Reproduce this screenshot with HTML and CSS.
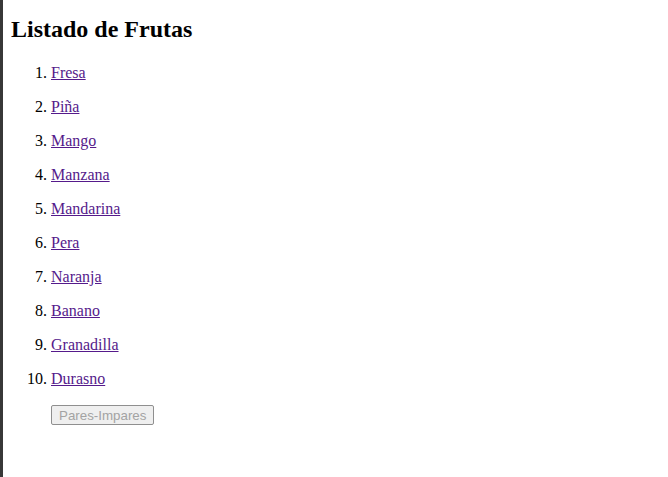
FILE: index.html
```html
<!DOCTYPE html>
<html lang="es">
<head>
    <meta charset="UTF-8">
    <title>Frutas</title>
    <link rel="stylesheet" href="styles.css">
</head>
<body>
<h2 class="titulo">Listado de Frutas</h2>
<ol class="lista">
    <li><p><a href="#">Fresa</a></p></li>
    <li><p><a href="#">Piña</a></p></li>
    <li><p><a href="#">Mango</a></p></li>
    <li><p><a href="#">Manzana</a></p></li>
    <li><p><a href="#">Mandarina</a></p></li>
    <li><p><a href="#">Pera</a></p></li>
    <li><p><a href="#">Naranja</a></p></li>
    <li><p><a href="#">Banano</a></p></li>
    <li><p><a href="#">Granadilla</a></p></li>
    <li><p><a href="#">Durasno</a></p></li>
    <div class="acciones"><button class="boton" disabled>Pares-Impares</button></div>
</ol>
</body>
</html>
```

FILE: styles.css
```css
html{
    height:100%;
    border-left:3px solid #383838;
    box-sizing:border-box;
}
body{
    margin:8px;
    font-family:"Liberation Serif","Times New Roman",serif;
    font-size:16px;
    color:#000;
}
.titulo{
    font-size:24px;
    margin:8px 0 21px 0;
}
.lista{
    margin:21px 0;
    padding-left:40px;
}
.lista p{
    margin:16px 0;
}
.lista a{
    color:#551a8b;
}
.acciones{
    padding-top:1px;
}
.boton{
    font-family:"Liberation Sans",Arial,sans-serif;
    font-size:13.33px;
    padding:2px 7px 1px 7px;
    border:1px solid #8f8f8f;
    border-radius:2px;
    background:#efefef;
    color:#a3a3a3;
}
```
